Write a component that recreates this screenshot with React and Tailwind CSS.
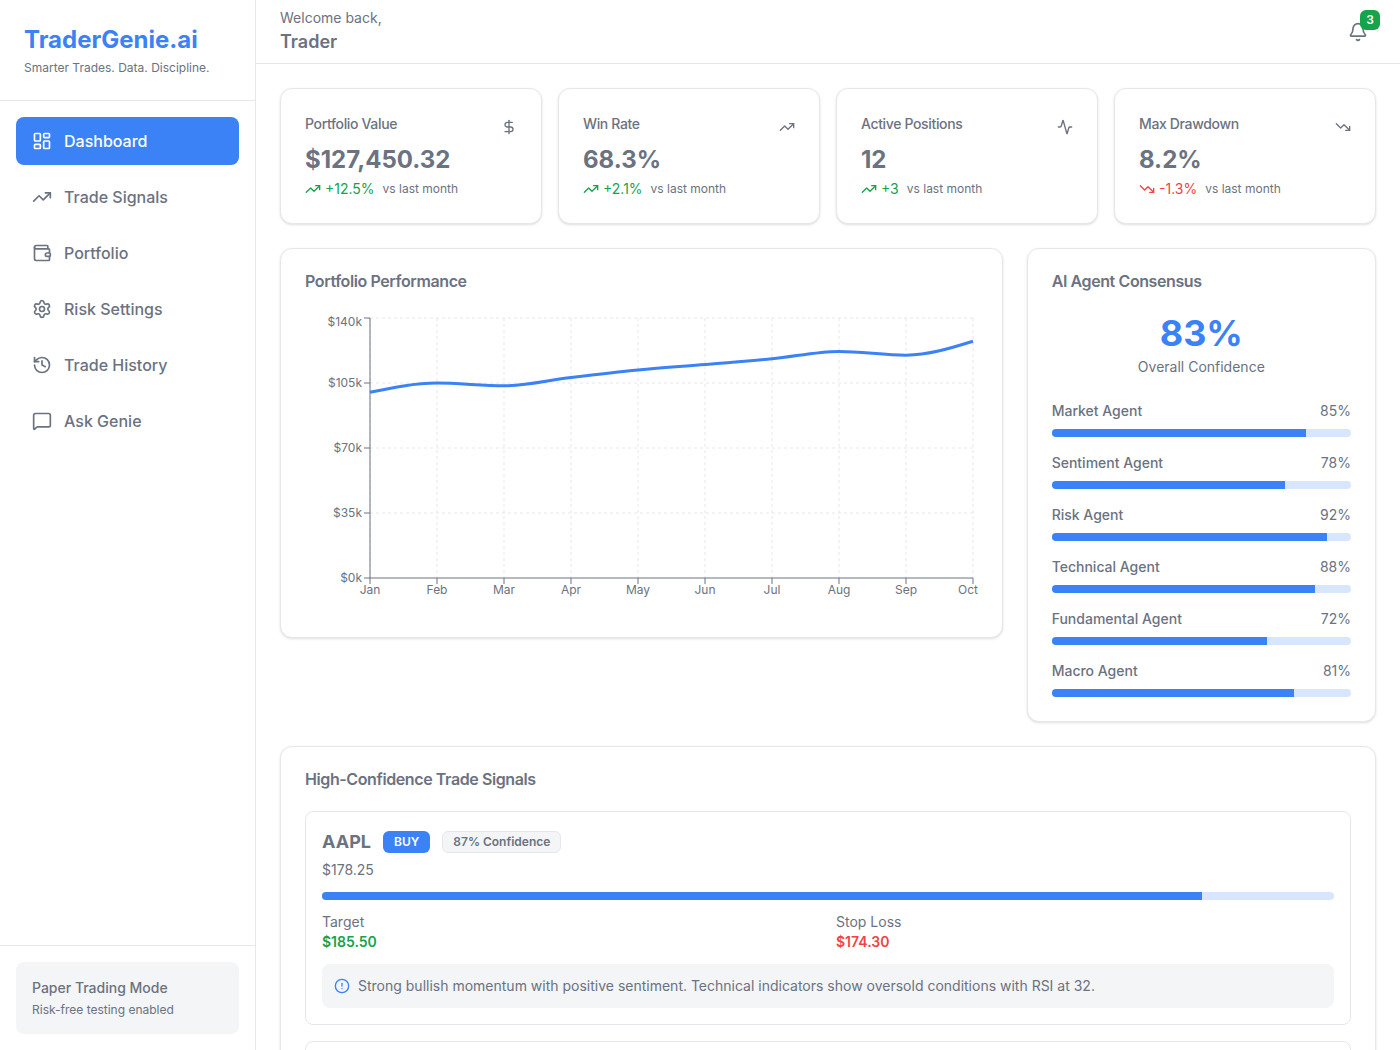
import React from "react";
import {
  LayoutDashboard,
  TrendingUp,
  TrendingDown,
  Wallet,
  Settings,
  History,
  MessageSquare,
  Bell,
  DollarSign,
  Activity,
  CircleAlert,
} from "lucide-react";

const navItems = [
  { label: "Dashboard", icon: LayoutDashboard, active: true },
  { label: "Trade Signals", icon: TrendingUp },
  { label: "Portfolio", icon: Wallet },
  { label: "Risk Settings", icon: Settings },
  { label: "Trade History", icon: History },
  { label: "Ask Genie", icon: MessageSquare },
];

const stats = [
  { title: "Portfolio Value", value: "$127,450.32", change: "+12.5%", up: true, icon: DollarSign },
  { title: "Win Rate", value: "68.3%", change: "+2.1%", up: true, icon: TrendingUp },
  { title: "Active Positions", value: "12", change: "+3", up: true, icon: Activity },
  { title: "Max Drawdown", value: "8.2%", change: "-1.3%", up: false, icon: TrendingDown },
];

const agents = [
  { name: "Market Agent", value: 85 },
  { name: "Sentiment Agent", value: 78 },
  { name: "Risk Agent", value: 92 },
  { name: "Technical Agent", value: 88 },
  { name: "Fundamental Agent", value: 72 },
  { name: "Macro Agent", value: 81 },
];

const months = ["Jan", "Feb", "Mar", "Apr", "May", "Jun", "Jul", "Aug", "Sep", "Oct"];
const values = [100000, 105000, 103500, 108000, 112000, 115000, 118000, 122000, 120000, 127450];
const yTicks = [
  { label: "$140k", y: 5, textY: 13 },
  { label: "$105k", y: 70, textY: 74 },
  { label: "$70k", y: 135, textY: 139 },
  { label: "$35k", y: 200, textY: 204 },
  { label: "$0k", y: 265, textY: 269 },
];

const xAt = (i) => 65 + (603 * i) / (months.length - 1);
const yAt = (v) => 265 - (260 * v) / 140000;

// same curve as d3 curveMonotoneX
function monotonePath(points) {
  const n = points.length;
  const sign = (v) => (v < 0 ? -1 : 1);
  const slopes = points.map((p, i) => {
    if (i === 0 || i === n - 1) return null;
    const h0 = p.x - points[i - 1].x;
    const h1 = points[i + 1].x - p.x;
    const s0 = (p.y - points[i - 1].y) / h0;
    const s1 = (points[i + 1].y - p.y) / h1;
    const q = (s0 * h1 + s1 * h0) / (h0 + h1);
    return (sign(s0) + sign(s1)) * Math.min(Math.abs(s0), Math.abs(s1), 0.5 * Math.abs(q)) || 0;
  });
  const endSlope = (h, s, t) => (3 * s - t) / 2;
  const h = points[1].x - points[0].x;
  slopes[0] = endSlope(h, (points[1].y - points[0].y) / h, slopes[1]);
  const hEnd = points[n - 1].x - points[n - 2].x;
  slopes[n - 1] = endSlope(hEnd, (points[n - 1].y - points[n - 2].y) / hEnd, slopes[n - 2]);

  let d = `M${points[0].x},${points[0].y}`;
  for (let i = 1; i < n; i++) {
    const dx = (points[i].x - points[i - 1].x) / 3;
    d += `C${points[i - 1].x + dx},${points[i - 1].y + dx * slopes[i - 1]},${points[i].x - dx},${points[i].y - dx * slopes[i]},${points[i].x},${points[i].y}`;
  }
  return d;
}

function PerformanceChart() {
  const line = monotonePath(values.map((v, i) => ({ x: xAt(i), y: yAt(v) })));
  return (
    <svg width="673" height="300" viewBox="0 0 673 300" className="block text-xs">
      <g stroke="#e5e7eb" strokeDasharray="3 3" fill="none">
        {yTicks.slice(0, 4).map((t) => (
          <line key={t.label} x1="65" x2="668" y1={t.y} y2={t.y} />
        ))}
        {months.map((m, i) => (
          <line key={m} x1={xAt(i)} x2={xAt(i)} y1="5" y2="265" />
        ))}
      </g>
      <g stroke="#6b7280" fill="none">
        <line x1="65" x2="65" y1="5" y2="265" />
        <line x1="65" x2="668" y1="265" y2="265" />
        {yTicks.map((t) => (
          <line key={t.label} x1="59" x2="65" y1={t.y} y2={t.y} />
        ))}
        {months.map((m, i) => (
          <line key={m} x1={xAt(i)} x2={xAt(i)} y1="265" y2="271" />
        ))}
      </g>
      <g fill="#6b7280">
        {yTicks.map((t) => (
          <text key={t.label} x="57" y={t.textY} textAnchor="end">
            {t.label}
          </text>
        ))}
        {months.map((m, i) => (
          <text key={m} x={i === 9 ? xAt(i) - 5 : xAt(i)} y="281" textAnchor="middle">
            {m}
          </text>
        ))}
      </g>
      <path d={line} fill="none" stroke="#3b82f6" strokeWidth="3" />
    </svg>
  );
}

function Card({ className = "", children }) {
  return (
    <div className={`bg-white border border-[#e5e7eb] rounded-xl shadow-sm p-6 ${className}`}>
      {children}
    </div>
  );
}

export default function App() {
  return (
    <div className="h-screen flex overflow-hidden bg-white text-[#6b7280] font-['Inter',sans-serif]">
      {/* Sidebar */}
      <aside className="w-64 shrink-0 flex flex-col border-r border-[#e5e7eb]">
        <div className="h-[101px] px-6 pt-6 border-b border-[#e5e7eb]">
          <h1 className="text-2xl font-bold text-[#3b82f6] leading-8">TraderGenie.ai</h1>
          <p className="text-xs mt-1 leading-4">Smarter Trades. Data. Discipline.</p>
        </div>
        <nav className="flex-1 p-4 flex flex-col gap-2">
          {navItems.map((item) => (
            <div
              key={item.label}
              className={`h-12 px-4 flex items-center gap-3 rounded-lg font-medium ${
                item.active ? "bg-[#3b82f6] text-white" : ""
              }`}
            >
              <item.icon size={20} />
              <span>{item.label}</span>
            </div>
          ))}
        </nav>
        <div className="p-4 border-t border-[#e5e7eb]">
          <div className="h-[72px] p-4 bg-[#f3f5f7] rounded-lg">
            <p className="text-sm font-medium leading-5">Paper Trading Mode</p>
            <p className="text-xs leading-4 mt-1">Risk-free testing enabled</p>
          </div>
        </div>
      </aside>

      <div className="flex-1 min-w-0 flex flex-col">
        {/* Header */}
        <header className="h-16 shrink-0 px-6 flex items-center justify-between border-b border-[#e5e7eb]">
          <div>
            <p className="text-sm leading-5">Welcome back,</p>
            <p className="text-lg font-semibold leading-7">Trader</p>
          </div>
          <div className="relative w-9 h-9 flex items-center justify-center">
            <Bell size={20} />
            <span className="absolute -top-1 right-[-4px] w-5 h-5 rounded-md bg-[#16a34a] text-white text-xs font-semibold flex items-center justify-center">
              3
            </span>
          </div>
        </header>

        <main className="flex-1 min-h-0 overflow-hidden p-6 flex flex-col gap-6">
          {/* Stat cards */}
          <div className="grid grid-cols-4 gap-4">
            {stats.map((s) => {
              const Trend = s.up ? TrendingUp : TrendingDown;
              return (
                <Card key={s.title}>
                  <div className="h-[31px] flex items-start justify-between">
                    <span className="text-sm font-medium tracking-tight leading-[22px]">{s.title}</span>
                    <s.icon size={16} className="mt-1.5" />
                  </div>
                  <div className="text-2xl font-bold leading-8">{s.value}</div>
                  <div className="flex items-center gap-1 mt-0.5 text-sm leading-[21px]">
                    <Trend size={16} className={s.up ? "text-[#16a34a]" : "text-[#ef4444]"} />
                    <span className={s.up ? "text-[#16a34a]" : "text-[#ef4444]"}>{s.change}</span>
                    <span className="text-xs ml-1">vs last month</span>
                  </div>
                </Card>
              );
            })}
          </div>

          {/* Chart and consensus */}
          <div className="grid grid-cols-3 gap-6 items-start">
            <Card className="col-span-2">
              <h2 className="font-semibold leading-4 tracking-tight mb-6">Portfolio Performance</h2>
              <PerformanceChart />
            </Card>
            <Card>
              <h2 className="font-semibold leading-4 tracking-tight">AI Agent Consensus</h2>
              <div className="text-center mt-6">
                <div className="text-4xl font-bold text-[#3b82f6] leading-10">83%</div>
                <div className="text-sm leading-5 mt-1">Overall Confidence</div>
              </div>
              <div className="flex flex-col gap-4 mt-6">
                {agents.map((a) => (
                  <div key={a.name}>
                    <div className="flex justify-between text-sm leading-5 mb-2">
                      <span className="font-medium">{a.name}</span>
                      <span>{a.value}%</span>
                    </div>
                    <div className="h-2 rounded-full bg-[#3b82f6]/20 overflow-hidden">
                      <div className="h-full bg-[#3b82f6]" style={{ width: `${a.value}%` }} />
                    </div>
                  </div>
                ))}
              </div>
            </Card>
          </div>

          {/* Trade signals */}
          <Card className="shrink-0">
            <h2 className="font-semibold leading-4 tracking-tight mb-6">High-Confidence Trade Signals</h2>
            <div className="flex flex-col gap-4">
              <div className="border border-[#e5e7eb] rounded-lg p-4">
                <div className="flex items-center gap-3">
                  <span className="text-lg font-bold leading-7">AAPL</span>
                  <span className="px-[11px] py-0.5 rounded-md bg-[#3b82f6] text-white text-xs font-semibold leading-[18px]">
                    BUY
                  </span>
                  <span className="px-2.5 py-0.5 rounded-md bg-[#f3f5f7] border border-[#e5e7eb] text-xs font-semibold leading-4">
                    87% Confidence
                  </span>
                </div>
                <p className="text-sm leading-5 mt-1">$178.25</p>
                <div className="h-2 rounded-full bg-[#3b82f6]/20 overflow-hidden mt-3">
                  <div className="h-full bg-[#3b82f6]" style={{ width: "87%" }} />
                </div>
                <div className="grid grid-cols-2 gap-4 mt-3">
                  <div>
                    <p className="text-sm leading-5">Target</p>
                    <p className="text-sm font-semibold text-[#16a34a] leading-5">$185.50</p>
                  </div>
                  <div>
                    <p className="text-sm leading-5">Stop Loss</p>
                    <p className="text-sm font-semibold text-[#ef4444] leading-5">$174.30</p>
                  </div>
                </div>
                <div className="mt-3 p-3 rounded-lg bg-[#f3f5f7] flex items-center gap-2 text-sm leading-5">
                  <CircleAlert size={16} className="text-[#3b82f6]" />
                  <span>Strong bullish momentum with positive sentiment. Technical indicators show oversold conditions with RSI at 32.</span>
                </div>
              </div>
              <div className="h-[214px] border border-[#e5e7eb] rounded-lg" />
            </div>
          </Card>
        </main>
      </div>
    </div>
  );
}
